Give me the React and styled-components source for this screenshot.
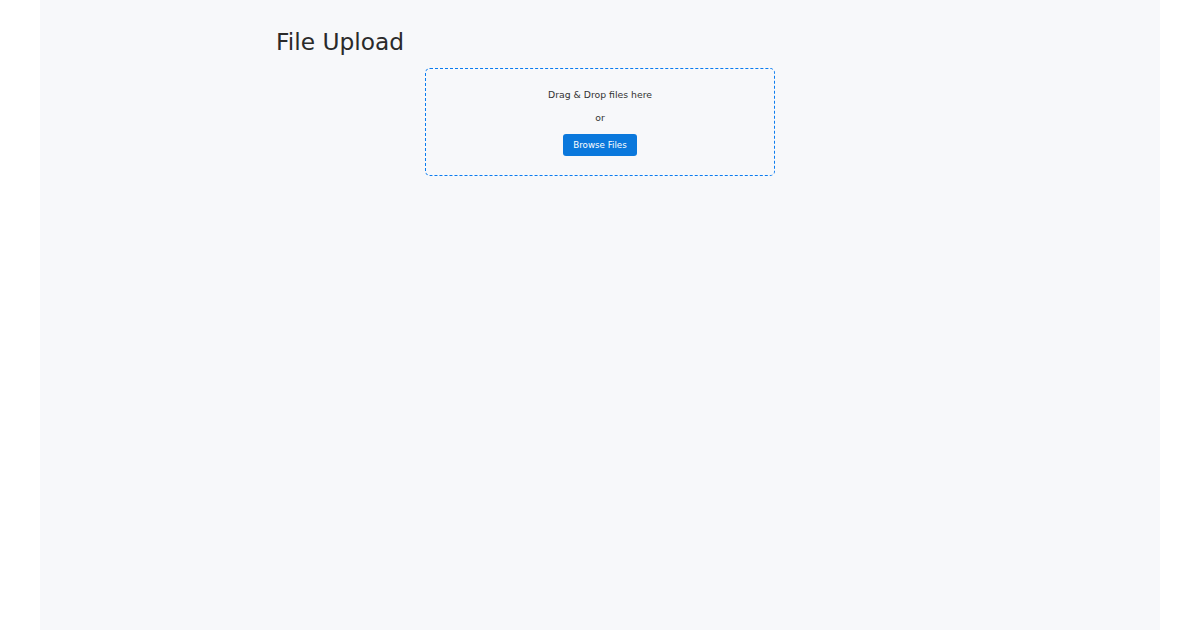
import styled, { createGlobalStyle } from "styled-components";

const GlobalStyle = createGlobalStyle`
  body {
    margin: 0;
    background: #ffffff;
    font-family: "DejaVu Sans", sans-serif;
    color: #333333;
  }
`;

const Page = styled.div`
  max-width: 1120px;
  min-height: 100vh;
  margin: 0 auto;
  background: #f7f8fa;
  box-sizing: border-box;
  padding-top: 28px;
`;

const Column = styled.div`
  width: 648px;
  margin: 0 auto;
`;

const Title = styled.h1`
  font-size: 23.3px;
  font-weight: normal;
  color: #2a2a2a;
  margin: 0 0 13px;
`;

const DropZone = styled.div`
  width: 350px;
  margin: 0 auto;
  box-sizing: border-box;
  border: 1px dashed #0a7cf0;
  border-radius: 5px;
  padding: 19px 20px 19px;
  text-align: center;
  font-size: 9.3px;
  .line {
    margin: 0 0 10px;
    line-height: 13px;
  }
`;

const BrowseButton = styled.button`
  font-family: "DejaVu Sans", sans-serif;
  font-size: 8.7px;
  color: #ffffff;
  background: #0a78dc;
  border: none;
  border-radius: 3px;
  height: 22px;
  padding: 0 10.5px;
  cursor: pointer;
`;

const App = () => {
  return (
    <Page>
      <GlobalStyle />
      <Column>
        <Title>File Upload</Title>
        <DropZone>
          <p className="line">Drag &amp; Drop files here</p>
          <p className="line">or</p>
          <BrowseButton>Browse Files</BrowseButton>
        </DropZone>
      </Column>
    </Page>
  );
};

export default App;
